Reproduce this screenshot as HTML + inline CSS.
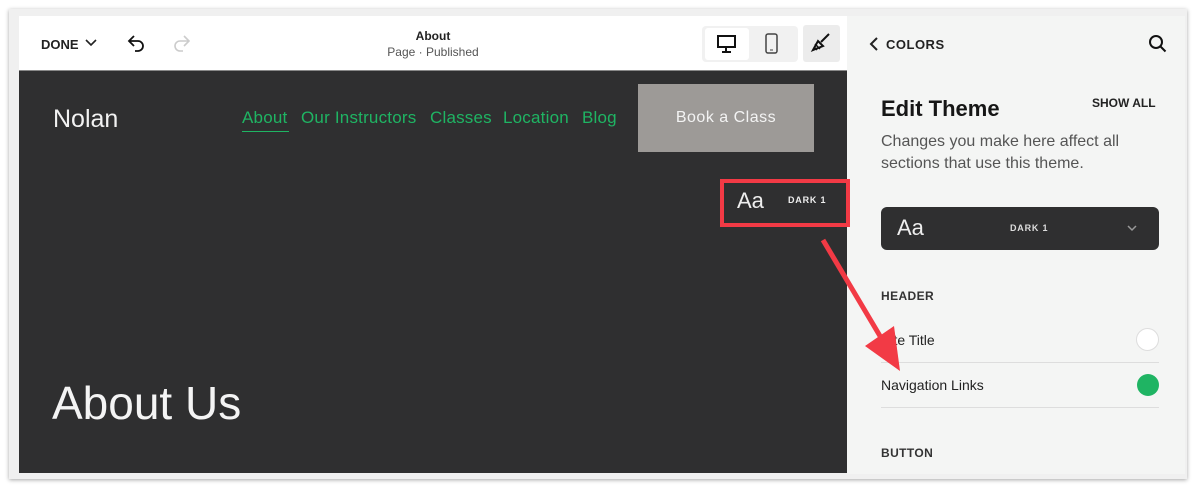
<!DOCTYPE html>
<html><head><style>
*{margin:0;padding:0;box-sizing:border-box}
body{width:1200px;height:489px;background:#fff;font-family:"Liberation Sans",sans-serif;position:relative;overflow:hidden}
.win{position:absolute;left:9px;top:9px;width:1178px;height:470px;background:#f0f0f0;box-shadow:0 1px 4px rgba(0,0,0,.35)}
.top{position:absolute;left:19px;top:16px;width:828px;height:55px;background:#fff;border-bottom:1px solid #888}
.dark{position:absolute;left:19px;top:71px;width:828px;height:402px;background:#2f2f30}
.panel{position:absolute;left:847px;top:16px;width:338px;height:458px;background:#f4f5f4}
.a{position:absolute;white-space:nowrap}
.nav{color:#1fb463;font-size:17px;top:108px;letter-spacing:.2px}
</style></head><body>
<div class="win"></div>
<div class="top"></div>
<div class="dark"></div>
<div class="panel"></div>
<div class="a" style="left:41px;top:37px;font-size:13px;font-weight:bold;color:#222">DONE</div>
<svg class="a" style="left:84px;top:38px" width="14" height="10"><path d="M2 2l5 5 5-5" stroke="#222" stroke-width="1.6" fill="none"/></svg>
<svg class="a" style="left:126px;top:33px" width="22" height="20"><path d="M8 3L3 8l5 5M3 8h9a5 5 0 0 1 0 10H9" stroke="#111" stroke-width="1.8" fill="none"/></svg>
<svg class="a" style="left:170px;top:33px" width="22" height="20"><path d="M14 3l5 5-5 5M19 8h-9a5 5 0 0 0 0 10h3" stroke="#ccc" stroke-width="1.6" fill="none"/></svg>
<div class="a" style="left:378px;top:29px;width:110px;text-align:center;font-size:12px;font-weight:bold;color:#222">About</div>
<div class="a" style="left:378px;top:45px;width:110px;text-align:center;font-size:12px;color:#555">Page · Published</div>
<div class="a" style="left:702px;top:26px;width:96px;height:36px;background:#f1f1f1;border-radius:4px"></div>
<div class="a" style="left:705px;top:28px;width:44px;height:32px;background:#fff;border-radius:3px"></div>
<svg class="a" style="left:716px;top:34px" width="22" height="20"><rect x="2" y="2" width="17" height="11" stroke="#111" stroke-width="2" fill="none"/><path d="M10 13v4M6 18h9" stroke="#111" stroke-width="2"/></svg>
<svg class="a" style="left:764px;top:32px" width="16" height="24"><rect x="2" y="2" width="11" height="19" rx="2" stroke="#444" stroke-width="1.5" fill="none"/><path d="M6 18h3" stroke="#444"/></svg>
<div class="a" style="left:803px;top:25px;width:37px;height:37px;background:#ececec;border-radius:3px"></div>
<svg class="a" style="left:809px;top:31px" width="24" height="24"><path d="M20 3l-8 8M4 19l5-9 5 5z" stroke="#111" stroke-width="2" fill="none"/><path d="M6 13l5 5M5 16l3 3" stroke="#111" stroke-width="1.5"/></svg>
<div class="a" style="left:53px;top:105px;font-size:25px;color:#f2f2f2">Nolan</div>
<div class="a nav" style="left:242px">About</div>
<div class="a" style="left:242px;top:131px;width:47px;height:1px;background:#1fb463"></div>
<div class="a nav" style="left:301px">Our Instructors</div>
<div class="a nav" style="left:430px">Classes</div>
<div class="a nav" style="left:503px">Location</div>
<div class="a nav" style="left:582px">Blog</div>
<div class="a" style="left:638px;top:84px;width:176px;height:68px;background:#9d9a97;color:#f3f3f3;font-size:16px;letter-spacing:.5px;text-align:center;line-height:68px">Book a Class</div>
<div class="a" style="left:720px;top:179px;width:130px;height:48px;border:4px solid #f23a45"></div>
<div class="a" style="left:737px;top:188px;font-size:22px;color:#eee">Aa</div>
<div class="a" style="left:788px;top:195px;font-size:9px;font-weight:bold;color:#eee;letter-spacing:.8px">DARK 1</div>
<div class="a" style="left:52px;top:376px;font-size:46px;color:#f4f4f4">About Us</div>
<svg class="a" style="left:868px;top:35px" width="14" height="18"><path d="M9 3L3 9l6 6" stroke="#222" stroke-width="2" fill="none"/></svg>
<div class="a" style="left:886px;top:37px;font-size:13px;font-weight:bold;color:#222;letter-spacing:.5px">COLORS</div>
<svg class="a" style="left:1148px;top:34px" width="20" height="20"><circle cx="8" cy="8" r="6" stroke="#111" stroke-width="2" fill="none"/><path d="M12.5 12.5l5 5" stroke="#111" stroke-width="2"/></svg>
<div class="a" style="left:881px;top:96px;font-size:22px;font-weight:bold;color:#161616">Edit Theme</div>
<div class="a" style="left:1092px;top:96px;font-size:12px;font-weight:bold;color:#222">SHOW ALL</div>
<div class="a" style="left:881px;top:131px;font-size:16px;line-height:22px;color:#555;white-space:normal;width:280px">Changes you make here affect all sections that use this theme.</div>
<div class="a" style="left:881px;top:207px;width:278px;height:43px;background:#2f2f30;border-radius:6px"></div>
<div class="a" style="left:897px;top:215px;font-size:22px;color:#eee">Aa</div>
<div class="a" style="left:1010px;top:223px;font-size:9px;font-weight:bold;color:#ddd;letter-spacing:.8px">DARK 1</div>
<svg class="a" style="left:1126px;top:224px" width="12" height="8"><path d="M2 2l4 4 4-4" stroke="#999" stroke-width="1.5" fill="none"/></svg>
<div class="a" style="left:881px;top:289px;font-size:12px;font-weight:bold;color:#333;letter-spacing:.4px">HEADER</div>
<div class="a" style="left:881px;top:332px;font-size:14px;color:#222">Site Title</div>
<div class="a" style="left:1136px;top:328px;width:23px;height:23px;border-radius:50%;background:#fff;border:1px solid #ddd"></div>
<div class="a" style="left:881px;top:362px;width:278px;height:1px;background:#ddd"></div>
<div class="a" style="left:881px;top:377px;font-size:14px;color:#222">Navigation Links</div>
<div class="a" style="left:1137px;top:374px;width:22px;height:22px;border-radius:50%;background:#1fb463"></div>
<div class="a" style="left:881px;top:407px;width:278px;height:1px;background:#ddd"></div>
<div class="a" style="left:881px;top:446px;font-size:12px;font-weight:bold;color:#333;letter-spacing:.4px">BUTTON</div>
<svg class="a" style="left:0;top:0" width="1200" height="489"><path d="M823 240L880 336" stroke="#f23a45" stroke-width="5"/><path d="M865 346L900 371L894 326Z" fill="#f23a45"/></svg>
</body></html>
